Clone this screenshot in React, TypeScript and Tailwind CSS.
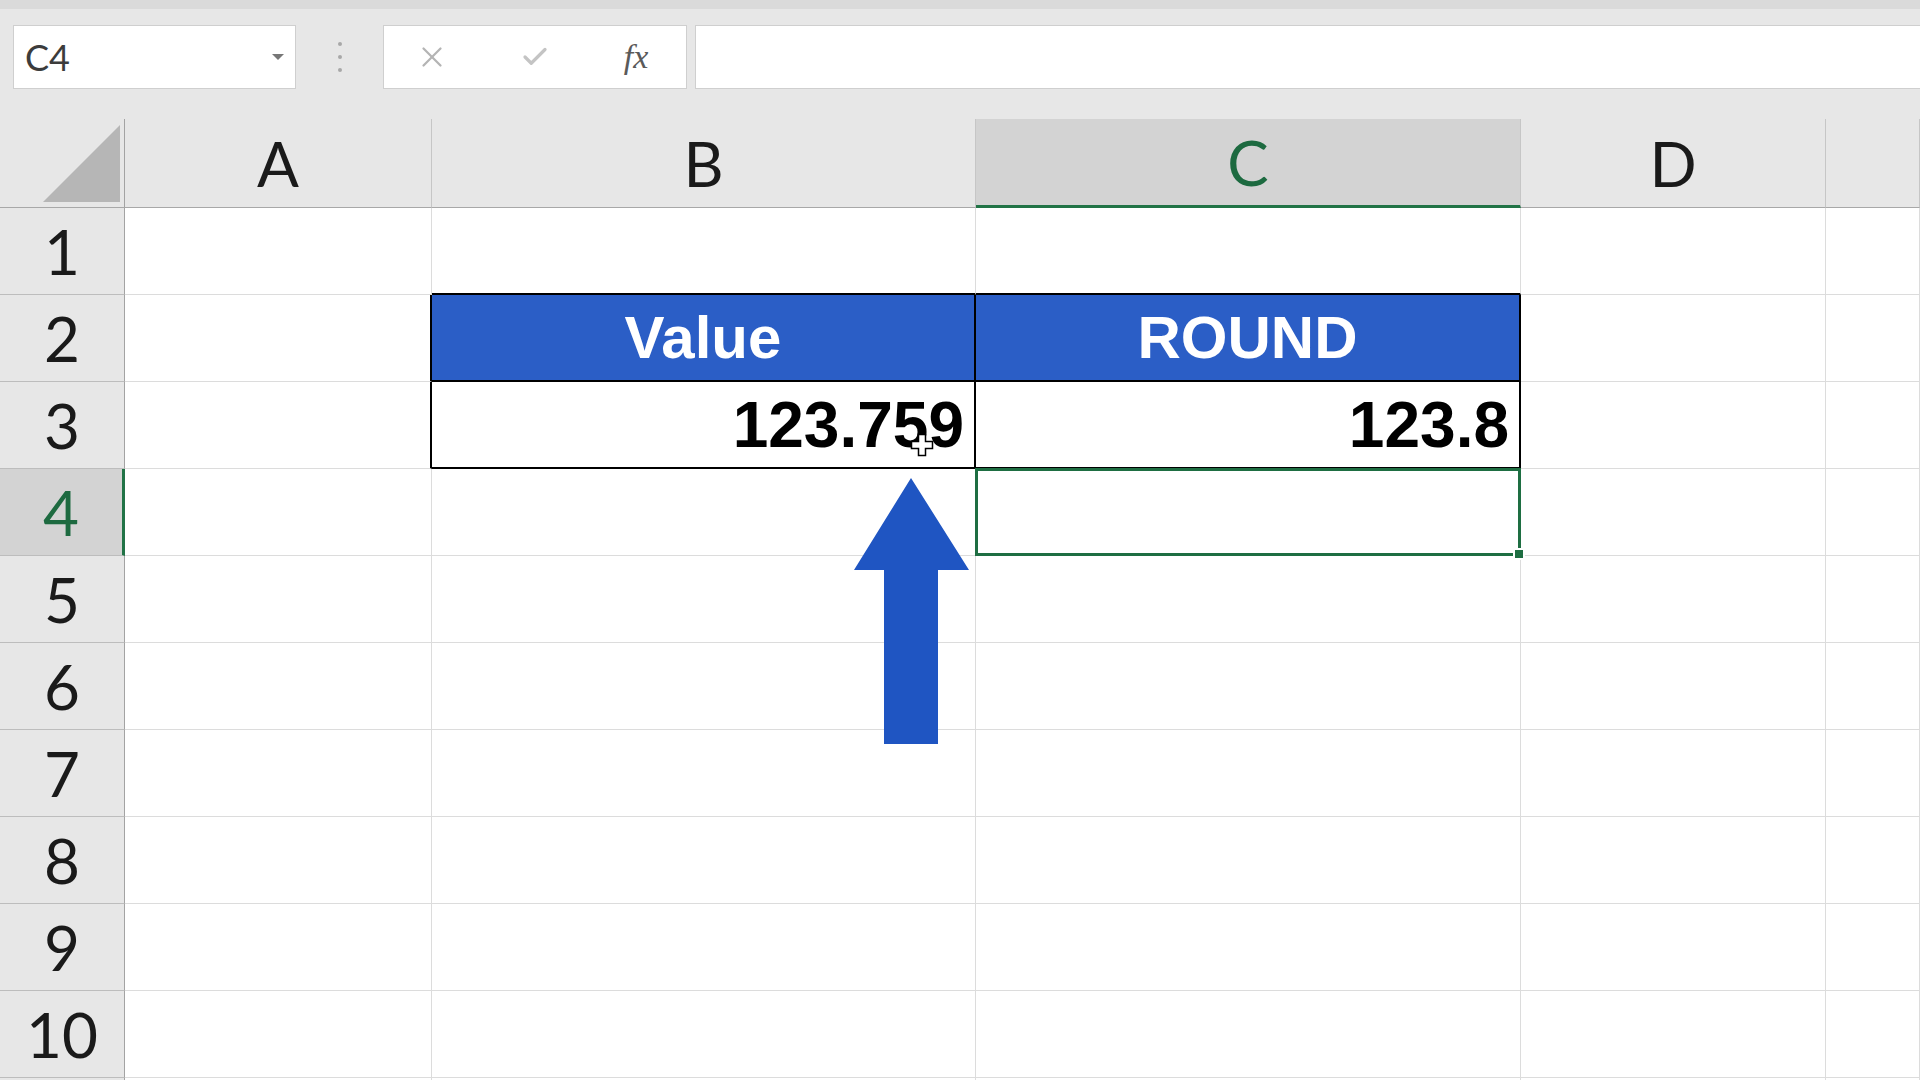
import React from 'react';
import { X, Check } from 'lucide-react';

type Col = { key: string; width: string };

const columns: Col[] = [
  { key: 'A', width: 'w-[307px]' },
  { key: 'B', width: 'w-[544px]' },
  { key: 'C', width: 'w-[545px]' },
  { key: 'D', width: 'w-[305px]' },
  { key: 'E', width: 'flex-1' },
];

const rows = [1, 2, 3, 4, 5, 6, 7, 8, 9, 10, 11];

const uiFont = "font-['Lato','Open_Sans',sans-serif]";
const cellFont = "font-['Liberation_Sans',Arial,sans-serif]";

function inTable(r: number, c: string) {
  return (c === 'B' || c === 'C') && (r === 2 || r === 3);
}

function cellClass(r: number, c: string) {
  const blackRight = inTable(r, c) || (c === 'A' && (r === 2 || r === 3));
  const blackBottom = (c === 'B' || c === 'C') && r >= 1 && r <= 3;
  const right = blackRight ? 'border-r-2 border-r-black' : 'border-r border-r-[#dcdcdc]';
  const bottom = blackBottom ? 'border-b-2 border-b-black' : 'border-b border-b-[#dcdcdc]';
  const bg = r === 2 && (c === 'B' || c === 'C') ? 'bg-[#2b5ec6]' : 'bg-white';
  return `${right} ${bottom} ${bg}`;
}

function CellContent({ r, c }: { r: number; c: string }) {
  if (r === 2 && c === 'B')
    return <span className={`${cellFont} mx-auto text-[60px] font-bold leading-none text-white`}>Value</span>;
  if (r === 2 && c === 'C')
    return <span className={`${cellFont} mx-auto text-[60px] font-bold leading-none text-white`}>ROUND</span>;
  if (r === 3 && c === 'B')
    return <span className={`${cellFont} ml-auto pr-[10px] text-[64px] font-bold leading-none text-black`}>123.759</span>;
  if (r === 3 && c === 'C')
    return <span className={`${cellFont} ml-auto pr-[10px] text-[64px] font-bold leading-none text-black`}>123.8</span>;
  if (r === 4 && c === 'C')
    return (
      <div className="absolute -top-px -left-px -right-px -bottom-px z-10 border-[3px] border-[#1e6e42]">
        <div className="absolute -right-[7px] -bottom-[7px] h-[12px] w-[12px] border-2 border-white bg-[#1e6e42]" />
      </div>
    );
  return null;
}

function FormulaBar() {
  return (
    <div className="h-[119px] shrink-0">
      <div className="h-[9px] bg-[#dadada]" />
      <div className="flex items-start pt-[16px] pl-[13px]">
        {/* name box */}
        <div className="flex h-[64px] w-[283px] items-center justify-between border border-[#cfcfcf] bg-white pl-[11px] pr-[11px]">
          <span className={`${uiFont} text-[36px] leading-none text-[#3c3c3c]`}>C4</span>
          <div className="h-0 w-0 border-x-[6px] border-t-[6px] border-x-transparent border-t-[#777]" />
        </div>
        <div className="flex h-[64px] w-[87px] flex-col items-center justify-center gap-[9px]">
          <div className="h-[4px] w-[4px] rounded-full bg-[#a8a8a8]" />
          <div className="h-[4px] w-[4px] rounded-full bg-[#a8a8a8]" />
          <div className="h-[4px] w-[4px] rounded-full bg-[#a8a8a8]" />
        </div>
        {/* cancel / enter / fx */}
        <div className="flex h-[64px] w-[304px] items-center border border-[#cfcfcf] bg-white">
          <div className="flex w-[96px] justify-center">
            <X className="h-[34px] w-[34px] text-[#b4b4b4]" strokeWidth={1.6} />
          </div>
          <div className="flex w-[110px] justify-center">
            <Check className="h-[30px] w-[30px] text-[#c4c4c4]" strokeWidth={2.6} />
          </div>
          <div className="flex w-[92px] justify-center">
            <span className="font-['Liberation_Serif',serif] text-[34px] italic leading-none text-[#5a5a5a]">fx</span>
          </div>
        </div>
        <div className="ml-[8px] h-[64px] flex-1 border-y border-l border-[#cfcfcf] bg-white" />
      </div>
    </div>
  );
}

function ColumnHeaders() {
  return (
    <div className="flex h-[89px] shrink-0">
      <div className="relative w-[125px] shrink-0 border-r border-b border-r-[#a3a3a3] border-b-[#a8a8a8]">
        <svg className="absolute left-[43px] top-[6px]" width="77" height="77" viewBox="0 0 77 77">
          <polygon points="77,0 77,77 0,77" fill="#b6b6b6" />
        </svg>
      </div>
      {columns.map((col) => {
        const selected = col.key === 'C';
        return (
          <div
            key={col.key}
            className={`${col.width} flex shrink-0 items-center justify-center border-r border-r-[#c6c6c6] ${
              selected ? 'border-b-[3px] border-b-[#217346] bg-[#d3d3d3]' : 'border-b border-b-[#a8a8a8]'
            }`}
          >
            {col.key !== 'E' && (
              <span
                className={`${uiFont} text-[62px] leading-none ${selected ? 'text-[#1d6a40]' : 'text-[#1a1a1a]'}`}
              >
                {col.key}
              </span>
            )}
          </div>
        );
      })}
    </div>
  );
}

export default function App() {
  return (
    <div className="relative flex h-[1080px] w-[1920px] flex-col overflow-hidden bg-[#e7e7e7]">
      <FormulaBar />
      <ColumnHeaders />

      <div className="flex flex-col">
        {rows.map((r) => {
          const active = r === 4;
          return (
            <div key={r} className="flex h-[87px] shrink-0">
              <div
                className={`flex w-[125px] shrink-0 items-center justify-center border-b border-b-[#bdbdbd] ${
                  active
                    ? 'border-r-[3px] border-r-[#217346] bg-[#d3d3d3]'
                    : 'border-r border-r-[#a3a3a3] bg-[#e7e7e7]'
                }`}
              >
                {r <= 10 && (
                  <span className={`${uiFont} text-[62px] leading-none ${active ? 'text-[#1d6a40]' : 'text-[#1a1a1a]'}`}>
                    {r}
                  </span>
                )}
              </div>
              {columns.map((col) => (
                <div
                  key={col.key}
                  className={`${col.width} relative flex shrink-0 items-center ${cellClass(r, col.key)}`}
                >
                  <CellContent r={r} c={col.key} />
                </div>
              ))}
            </div>
          );
        })}
      </div>

      {/* annotation arrow */}
      <svg className="absolute left-[854px] top-[478px] z-20" width="116" height="266" viewBox="0 0 116 266">
        <polygon points="57,0 115,92 84,92 84,266 30,266 30,92 0,92" fill="#1f55c2" />
      </svg>

      {/* mouse cursor */}
      <svg className="absolute left-[910px] top-[433px] z-20" width="24" height="24" viewBox="0 0 24 24">
        <path
          d="M8.5 1.5h7v7h7v7h-7v7h-7v-7h-7v-7h7z"
          fill="#fff"
          stroke="#000"
          strokeWidth="1.5"
          strokeLinejoin="miter"
        />
      </svg>
    </div>
  );
}
